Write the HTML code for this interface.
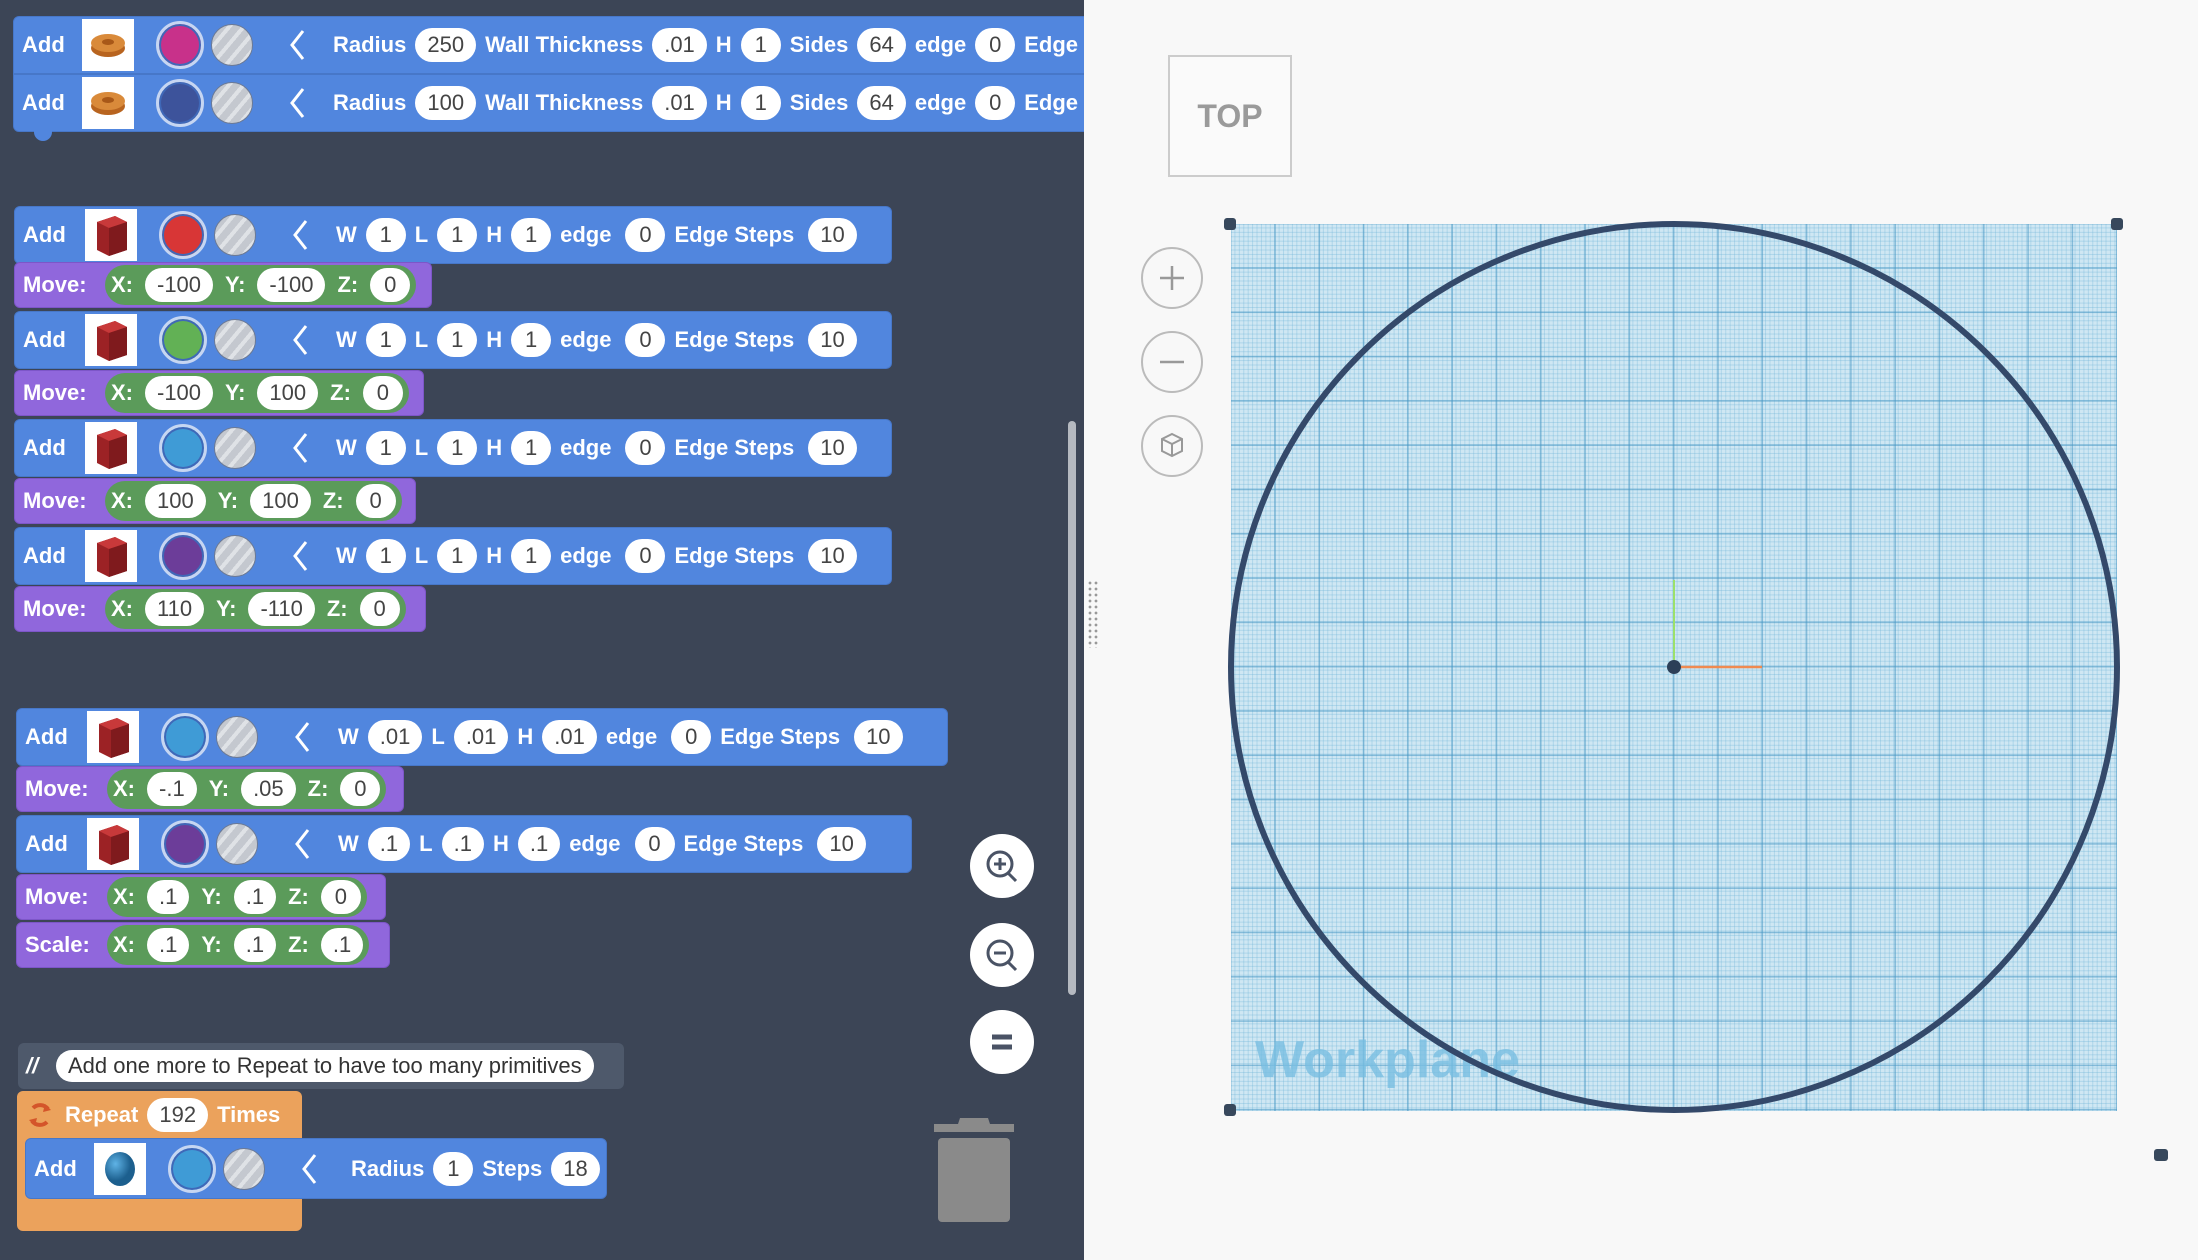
<!DOCTYPE html>
<html><head><meta charset="utf-8"><style>
*{box-sizing:border-box;margin:0;padding:0}
body{width:2198px;height:1260px;overflow:hidden;background:#f8f8f8;font-family:"Liberation Sans",sans-serif;position:relative}
#left{position:absolute;left:0;top:0;width:1084px;height:1260px;background:#3c4556;overflow:hidden}
.b{position:absolute;display:flex;align-items:center;color:#fff;font-size:22px;font-weight:bold;white-space:nowrap;border-radius:6px}
.add{background:#5186de;border:1px solid #4777c8}
.mv{background:#9067dc;border:1px solid #7d56c8}
.b>*{flex:none}
.p{display:inline-flex;align-items:center;justify-content:center;background:#fff;color:#444;height:34px;border-radius:17px;padding:0 12px;min-width:40px;font-size:22px;font-weight:normal}
.g{margin:0 9px}
.th{width:52px;height:52px;background:#fff;display:flex;align-items:center;justify-content:center}
.cc{width:48px;height:48px;border-radius:50%;border:3px solid #c6d6f2;box-shadow:inset 0 0 0 2px #3f68b8}
.gc{width:42px;height:42px;border-radius:50%;border:1.5px solid #6c7a95;background:repeating-linear-gradient(-50deg,#c4c8cf 0 7px,#dfe2e6 7px 11px)}
.ch{width:16px;height:32px}
.grn{background:#5b9b5a;border-radius:22px;height:40px;display:flex;align-items:center;padding:0 6px;gap:12px}
.nub{position:absolute;width:18px;height:10px;background:#5186de;border-radius:0 0 9px 9px}
.zb{position:absolute;width:64px;height:64px;border-radius:50%;background:#fff;display:flex;align-items:center;justify-content:center}
.nv{position:absolute;width:62px;height:62px;border-radius:50%;border:2px solid #bbb;display:flex;align-items:center;justify-content:center}
</style></head><body>
<div id="left">
<div class="b add" style="left:13px;top:16px;width:1100px;height:58px;border-radius:6px 0 0 0">
 <span style="margin-left:8px;width:60px">Add</span>
 <div class="th"><svg width="40" height="30"><ellipse cx="20" cy="18" rx="17" ry="9" fill="#b8641f"/><ellipse cx="20" cy="13" rx="17" ry="9" fill="#d98a3a"/><ellipse cx="20" cy="12" rx="6" ry="3" fill="#a85818"/></svg></div>
 <div class="cc" style="margin-left:22px;background:#c8318a"></div>
 <div class="gc" style="margin-left:7px"></div>
 <svg class="ch" style="margin-left:36px" viewBox="0 0 16 32"><path d="M14 2L3 16L14 30" stroke="#fff" stroke-width="3" fill="none"/></svg>
 <span style="margin-left:28px">Radius</span><span class="p g">250</span><span>Wall Thickness</span><span class="p g">.01</span><span>H</span><span class="p g">1</span><span>Sides</span><span class="p g">64</span><span>edge</span><span class="p g">0</span><span>Edge</span>
</div>
<div class="b add" style="left:13px;top:74px;width:1100px;height:58px;border-radius:0 0 0 6px">
 <span style="margin-left:8px;width:60px">Add</span>
 <div class="th"><svg width="40" height="30"><ellipse cx="20" cy="18" rx="17" ry="9" fill="#b8641f"/><ellipse cx="20" cy="13" rx="17" ry="9" fill="#d98a3a"/><ellipse cx="20" cy="12" rx="6" ry="3" fill="#a85818"/></svg></div>
 <div class="cc" style="margin-left:22px;background:#3d539b"></div>
 <div class="gc" style="margin-left:7px"></div>
 <svg class="ch" style="margin-left:36px" viewBox="0 0 16 32"><path d="M14 2L3 16L14 30" stroke="#fff" stroke-width="3" fill="none"/></svg>
 <span style="margin-left:28px">Radius</span><span class="p g">100</span><span>Wall Thickness</span><span class="p g">.01</span><span>H</span><span class="p g">1</span><span>Sides</span><span class="p g">64</span><span>edge</span><span class="p g">0</span><span>Edge</span>
</div>
<div class="nub" style="left:34px;top:131px"></div>

<div id="cubes"></div>
<script>
function cube(){return '<div class="th"><svg width="40" height="46" viewBox="0 0 40 46"><path d="M6 10L24 4L36 10L36 38L18 44L6 38Z" fill="#9c2225"/><path d="M6 10L24 4L36 10L18 16Z" fill="#c8393a"/><path d="M18 16L36 10L36 38L18 44Z" fill="#7f1a1d"/></svg></div>';}
function sph(){return '<div class="th"><svg width="40" height="40"><defs><radialGradient id="sg" cx="0.35" cy="0.35"><stop offset="0" stop-color="#5fb3e6"/><stop offset="1" stop-color="#1c5f8e"/></radialGradient></defs><ellipse cx="20" cy="20" rx="15" ry="17" fill="url(#sg)"/></svg></div>';}
var chev='<svg class="ch" style="margin-left:36px" viewBox="0 0 16 32"><path d="M14 2L3 16L14 30" stroke="#fff" stroke-width="3" fill="none"/></svg>';
function add(x,y,w,col,vals){
 return '<div class="b add" style="left:'+x+'px;top:'+y+'px;width:'+w+'px;height:58px">'+
 '<span style="margin-left:8px;width:62px">Add</span>'+cube()+
 '<div class="cc" style="margin-left:22px;background:'+col+'"></div><div class="gc" style="margin-left:7px"></div>'+chev+
 '<span style="margin-left:28px">W</span><span class="p g">'+vals[0]+'</span><span>L</span><span class="p g">'+vals[1]+'</span><span>H</span><span class="p g">'+vals[2]+'</span><span>edge</span><span class="p g" style="margin-left:14px">0</span><span>Edge Steps</span><span class="p g" style="margin-left:14px">10</span></div>';
}
function mv(x,y,w,lab,v){
 return '<div class="b mv" style="left:'+x+'px;top:'+y+'px;width:'+w+'px;height:46px"><span style="margin-left:8px;width:82px">'+lab+'</span><div class="grn"><span>X:</span><span class="p">'+v[0]+'</span><span>Y:</span><span class="p">'+v[1]+'</span><span>Z:</span><span class="p">'+v[2]+'</span></div></div>';
}
var h='';
h+=add(14,206,878,'#d83636',['1','1','1'])+mv(14,262,418,'Move:',['-100','-100','0']);
h+=add(14,311,878,'#62b155',['1','1','1'])+mv(14,370,410,'Move:',['-100','100','0']);
h+=add(14,419,878,'#3f9bd6',['1','1','1'])+mv(14,478,402,'Move:',['100','100','0']);
h+=add(14,527,878,'#6c3d99',['1','1','1'])+mv(14,586,412,'Move:',['110','-110','0']);
h+=add(16,708,932,'#3f9bd6',['.01','.01','.01'])+mv(16,766,388,'Move:',['-.1','.05','0']);
h+=add(16,815,896,'#6c3d99',['.1','.1','.1'])+mv(16,874,370,'Move:',['.1','.1','0'])+mv(16,922,374,'Scale:',['.1','.1','.1']);
document.getElementById('cubes').innerHTML=h;
</script>

<div class="b" style="left:18px;top:1043px;width:606px;height:46px;background:#4e596b">
 <span style="margin-left:8px;width:30px;font-style:italic">//</span>
 <span class="p" style="padding:0 12px;height:32px;color:#333">Add one more to Repeat to have too many primitives</span>
</div>
<div class="b" style="left:17px;top:1091px;width:285px;height:48px;background:#eba25c;border-radius:6px 6px 0 0">
 <svg width="30" height="30" style="margin-left:8px" viewBox="0 0 30 30"><path d="M8 8A10 10 0 0 1 23 9M22 22A10 10 0 0 1 7 21" stroke="#d4552a" stroke-width="4" fill="none"/><path d="M20 4L26 10L18 12Z M10 26L4 20L12 18Z" fill="#d4552a"/></svg>
 <span style="margin-left:10px">Repeat</span><span class="p g">192</span><span>Times</span>
</div>
<div style="position:absolute;left:17px;top:1139px;width:16px;height:62px;background:#eba25c"></div>
<div class="b" style="left:17px;top:1199px;width:285px;height:32px;background:#eba25c;border-radius:0 0 6px 6px"></div>
<div class="b add" style="left:25px;top:1138px;width:582px;height:61px">
 <span style="margin-left:8px;width:60px">Add</span>
 <script>document.write(sph())</script>
 <div class="cc" style="margin-left:22px;background:#3f9bd6"></div><div class="gc" style="margin-left:7px"></div>
 <svg class="ch" style="margin-left:36px" viewBox="0 0 16 32"><path d="M14 2L3 16L14 30" stroke="#fff" stroke-width="3" fill="none"/></svg>
 <span style="margin-left:34px">Radius</span><span class="p g">1</span><span>Steps</span><span class="p g">18</span>
</div>

<div class="zb" style="left:970px;top:834px"><svg width="40" height="40" viewBox="0 0 40 40"><circle cx="18" cy="18" r="12" stroke="#4a5365" stroke-width="3" fill="none"/><path d="M26 27L34 35M18 12V24M12 18H24" stroke="#4a5365" stroke-width="3"/></svg></div>
<div class="zb" style="left:970px;top:923px"><svg width="40" height="40" viewBox="0 0 40 40"><circle cx="18" cy="18" r="12" stroke="#4a5365" stroke-width="3" fill="none"/><path d="M26 27L34 35M12 18H24" stroke="#4a5365" stroke-width="3"/></svg></div>
<div class="zb" style="left:970px;top:1010px"><svg width="40" height="40" viewBox="0 0 40 40"><path d="M10 15H30M10 25H30" stroke="#4a5365" stroke-width="5"/></svg></div>
<svg style="position:absolute;left:930px;top:1112px" width="88" height="112" viewBox="0 0 88 112"><path d="M30 6H58L60 12H84V20H4V12H28Z" fill="#8a8a8a"/><rect x="8" y="26" width="72" height="84" rx="4" fill="#8a8a8a"/></svg>
<div style="position:absolute;left:1068px;top:421px;width:8px;height:574px;background:#b5b9c0;border-radius:4px"></div>
</div>
<div style="position:absolute;left:1087px;top:580px;width:12px;height:68px;background:radial-gradient(circle,#999 1.2px,transparent 1.6px) 0 0/6px 6px"></div>

<div style="position:absolute;left:1168px;top:55px;width:124px;height:122px;border:2px solid #ccc;background:#fafafa;display:flex;align-items:center;justify-content:center;color:#9a9a9a;font-weight:bold;font-size:32px">TOP</div>
<div class="nv" style="left:1141px;top:247px"><svg width="30" height="30"><path d="M15 3V27M3 15H27" stroke="#999" stroke-width="2.5"/></svg></div>
<div class="nv" style="left:1141px;top:331px"><svg width="30" height="30"><path d="M3 15H27" stroke="#999" stroke-width="2.5"/></svg></div>
<div class="nv" style="left:1141px;top:415px"><svg width="36" height="36" viewBox="0 0 36 36"><path d="M18 6L28 11V23L18 28L8 23V11Z M8 11L18 16L28 11 M18 16V28" stroke="#999" stroke-width="2" fill="none"/></svg></div>

<div style="position:absolute;left:1231px;top:224px;width:886px;height:887px;background-color:#cfe7f3;
background-image:
linear-gradient(to right,rgba(70,150,195,.55) 1.5px,transparent 1.5px),
linear-gradient(to bottom,rgba(70,150,195,.55) 1.5px,transparent 1.5px),
linear-gradient(to right,rgba(110,180,215,.35) 1px,transparent 1px),
linear-gradient(to bottom,rgba(110,180,215,.35) 1px,transparent 1px);
background-size:44.3px 44.3px,44.3px 44.3px,4.43px 4.43px,4.43px 4.43px;background-position:-1px -1px"></div>
<div style="position:absolute;left:1255px;top:1030px;font-size:52px;font-weight:bold;color:rgba(120,190,225,.8)">Workplane</div>
<svg style="position:absolute;left:0;top:0" width="2198" height="1260">
<circle cx="1674" cy="667" r="443" stroke="#34496a" stroke-width="6" fill="none"/>
<line x1="1674" y1="667" x2="1674" y2="580" stroke="#9be06a" stroke-width="2"/>
<line x1="1674" y1="667" x2="1762" y2="667" stroke="#f08a50" stroke-width="2.5"/>
<circle cx="1674" cy="667" r="7" fill="#2c3f58"/>
<rect x="1224" y="218" width="12" height="12" rx="3" fill="#37485c"/>
<rect x="2111" y="218" width="12" height="12" rx="3" fill="#37485c"/>
<rect x="1224" y="1104" width="12" height="12" rx="3" fill="#37485c"/>
<rect x="2154" y="1149" width="14" height="12" rx="3" fill="#37485c"/>
</svg>
</body></html>
